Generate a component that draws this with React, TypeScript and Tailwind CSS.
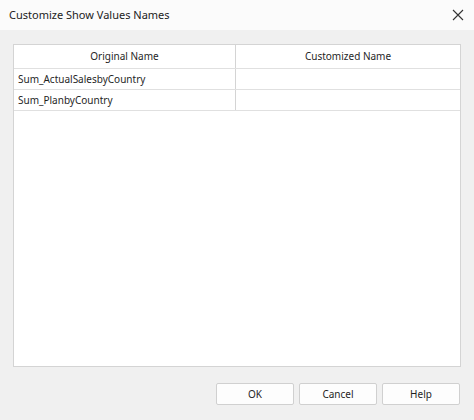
const rows = ['Sum_ActualSalesbyCountry', 'Sum_PlanbyCountry'];

function CloseIcon() {
  return (
    <svg width="12" height="12" viewBox="0 0 12 12" className="text-[#333]">
      <path d="M1 1 L11 11 M11 1 L1 11" stroke="currentColor" strokeWidth="1.1" fill="none" />
    </svg>
  );
}

export default function App() {
  return (
    <div
      className="w-[474px] h-[420px] bg-[#f0f0f0] flex flex-col text-[10px] text-[#1f1f1f] overflow-hidden"
      style={{ fontFamily: '"Segoe UI", "Noto Sans", "Open Sans", sans-serif' }}
    >
      {/* title bar */}
      <div className="h-[30px] bg-[#fbfbfb] flex items-center justify-between pl-[9px] pr-[10px]">
        <span className="text-[11px] text-[#222]">Customize Show Values Names</span>
        <CloseIcon />
      </div>

      {/* body */}
      <div className="flex-1 flex flex-col px-[13px] pt-[14px] pb-[14px]">
        <div className="h-[323px] w-[448px] bg-white border border-[#d4d4d4]">
          <div className="grid grid-cols-[222px_1fr] h-[24px] border-b border-[#e0e0e0]">
            <div className="flex items-center justify-center border-r border-[#d4d4d4]">Original Name</div>
            <div className="flex items-center justify-center">Customized Name</div>
          </div>
          {rows.map((r) => (
            <div key={r} className="grid grid-cols-[222px_1fr] h-[21px] border-b border-[#e0e0e0]">
              <div className="flex items-center pl-[4px] border-r border-[#d4d4d4]">{r}</div>
              <div />
            </div>
          ))}
        </div>

        <div className="flex justify-end gap-[5px] mt-[16px] pr-[1px]">
          {['OK', 'Cancel', 'Help'].map((b) => (
            <button
              key={b}
              className="w-[78px] h-[22px] bg-[#fdfdfd] border border-[#d0d0d0] rounded-[2px] flex items-center justify-center text-[10px] text-[#1f1f1f]"
            >
              {b}
            </button>
          ))}
        </div>
      </div>
    </div>
  );
}
